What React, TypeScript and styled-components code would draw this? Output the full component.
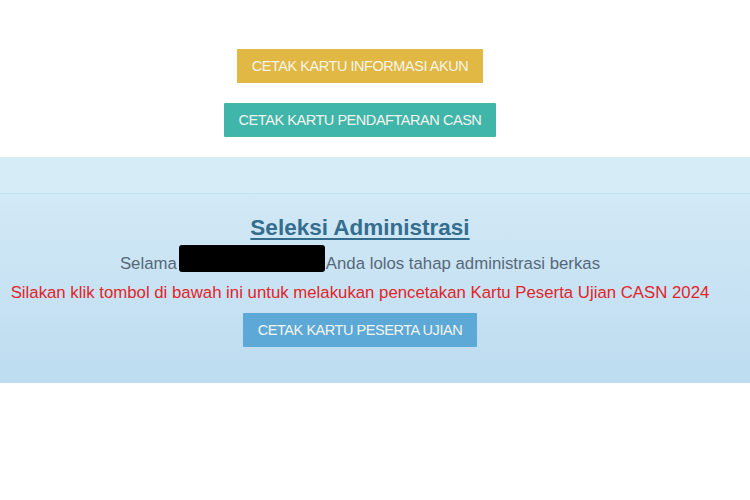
import { FC } from 'react';
import styled, { createGlobalStyle } from 'styled-components';

const GlobalStyle = createGlobalStyle`
  html, body {
    margin: 0;
    padding: 0;
    background: #ffffff;
    font-family: 'Liberation Sans', Arial, sans-serif;
  }
`;

const Page = styled.div`
  width: 750px;
  height: 500px;
  overflow: hidden;
  background: #ffffff;
`;

// the page content sits in a 720px column, a bit left of centre
const Column = styled.div`
  width: 720px;
  display: flex;
  flex-direction: column;
  align-items: center;
`;

const TopActions = styled(Column)`
  gap: 20px;
  padding-top: 49px;
`;

const PrintButton = styled.button<{ $bg: string; $width: number }>`
  width: ${p => p.$width}px;
  height: 34px;
  border: none;
  border-radius: 1px;
  background: ${p => p.$bg};
  color: #f4f4ee;
  font-family: 'Liberation Sans', Arial, sans-serif;
  font-size: 14.5px;
  letter-spacing: -0.45px;
  text-transform: uppercase;
  cursor: pointer;
  padding: 0;
`;

const Panel = styled.section`
  margin-top: 20px;
  height: 226px;
  display: flex;
  flex-direction: column;
`;

const PanelHeader = styled.div`
  height: 36px;
  background: #d6ecf7;
  border-bottom: 1px solid #c2e1f0;
`;

const PanelBody = styled.div`
  flex: 1;
  background: linear-gradient(to bottom, #d2e9f6 0%, #bddcf0 100%);
`;

const PanelContent = styled(Column)`
  padding-top: 21px;
`;

const Title = styled.h2`
  margin: 0;
  font-size: 22.5px;
  font-weight: 700;
  color: #356d8e;
  text-decoration: underline;
  text-underline-offset: 3px;
  line-height: 26px;
`;

const StatusLine = styled.p`
  margin: 4px 0 0;
  font-size: 16.8px;
  color: #56697a;
  line-height: 20px;
  white-space: nowrap;
`;

const Redacted = styled.span`
  display: inline-block;
  width: 146px;
  height: 27px;
  margin: 0 1px 0 2px;
  vertical-align: -3px;
  background: #000000;
  border-radius: 3px;
`;

const Notice = styled.p`
  margin: 9px 0 0;
  font-size: 16.8px;
  color: #e3242b;
  line-height: 20px;
  white-space: nowrap;
`;

const BottomAction = styled.div`
  margin-top: 10px;
`;

const App: FC = () => (
  <Page>
    <GlobalStyle />
    <TopActions>
      <PrintButton $bg="#e0b843" $width={246}>
        Cetak Kartu Informasi Akun
      </PrintButton>
      <PrintButton $bg="#40b5aa" $width={272}>
        Cetak Kartu Pendaftaran CASN
      </PrintButton>
    </TopActions>
    <Panel>
      <PanelHeader />
      <PanelBody>
        <PanelContent>
          <Title>Seleksi Administrasi</Title>
          <StatusLine>
            Selama
            <Redacted />
            Anda lolos tahap administrasi berkas
          </StatusLine>
          <Notice>
            Silakan klik tombol di bawah ini untuk melakukan pencetakan Kartu
            Peserta Ujian CASN 2024
          </Notice>
          <BottomAction>
            <PrintButton $bg="#5ca9d7" $width={234}>
              Cetak Kartu Peserta Ujian
            </PrintButton>
          </BottomAction>
        </PanelContent>
      </PanelBody>
    </Panel>
  </Page>
);

export default App;
